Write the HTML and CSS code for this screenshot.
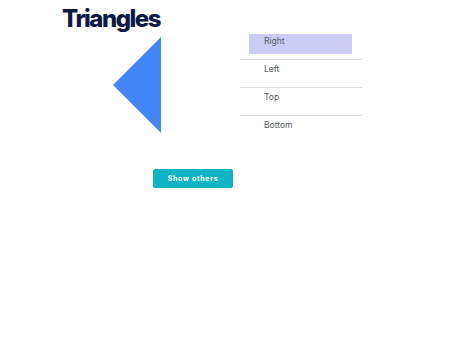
FILE: index.html
```html
<!DOCTYPE html>
<html>
<head>
<meta charset="utf-8">
<link rel="stylesheet" href="styles.css">
</head>
<body>
<div class="page">
  <div class="main">
    <h1 class="title">Triangles</h1>
    <div class="triangle"></div>
    <button class="btn">Show others</button>
  </div>
  <ul class="list">
    <li class="row"><span class="item active">Right</span></li>
    <li class="row"><span class="item">Left</span></li>
    <li class="row"><span class="item">Top</span></li>
    <li class="row"><span class="item">Bottom</span></li>
  </ul>
</div>
</body>
</html>
```

FILE: styles.css
```css
html, body {
  margin: 0;
  padding: 0;
  background: #ffffff;
}
.page {
  display: flex;
  align-items: flex-start;
  padding-left: 62px;
  font-family: Inter, "Noto Sans", sans-serif;
}
.main {
  width: 178px;
  display: flex;
  flex-direction: column;
  align-items: flex-start;
}
.title {
  margin: 4px 0 0 0;
  font-size: 24px;
  line-height: 30px;
  font-weight: 800;
  color: #0d1a45;
  letter-spacing: -1.5px;
}
.triangle {
  margin: 3px 0 0 51px;
  width: 0;
  height: 0;
  border-right: 48px solid #4287f5;
  border-top: 48px solid transparent;
  border-bottom: 48px solid transparent;
}
.btn {
  margin: 36px 0 0 91px;
  width: 80px;
  height: 19px;
  padding: 0;
  border: none;
  border-radius: 2px;
  background: #0fb5c5;
  color: #ffffff;
  font-family: Inter, "Noto Sans", sans-serif;
  font-size: 7px;
  font-weight: 700;
  letter-spacing: 0.7px;
}
.list {
  list-style: none;
  margin: 32px 0 0 0;
  padding: 0;
  width: 122px;
}
.row {
  padding: 2px 10px 5px 9px;
  border-bottom: 1px solid #dcdcdc;
}
.row:last-child {
  border-bottom: none;
}
.item {
  display: block;
  height: 20px;
  padding-left: 15px;
  font-size: 8.5px;
  line-height: 14px;
  color: #555a60;
}
.item.active {
  background: #cccbf5;
}
```
